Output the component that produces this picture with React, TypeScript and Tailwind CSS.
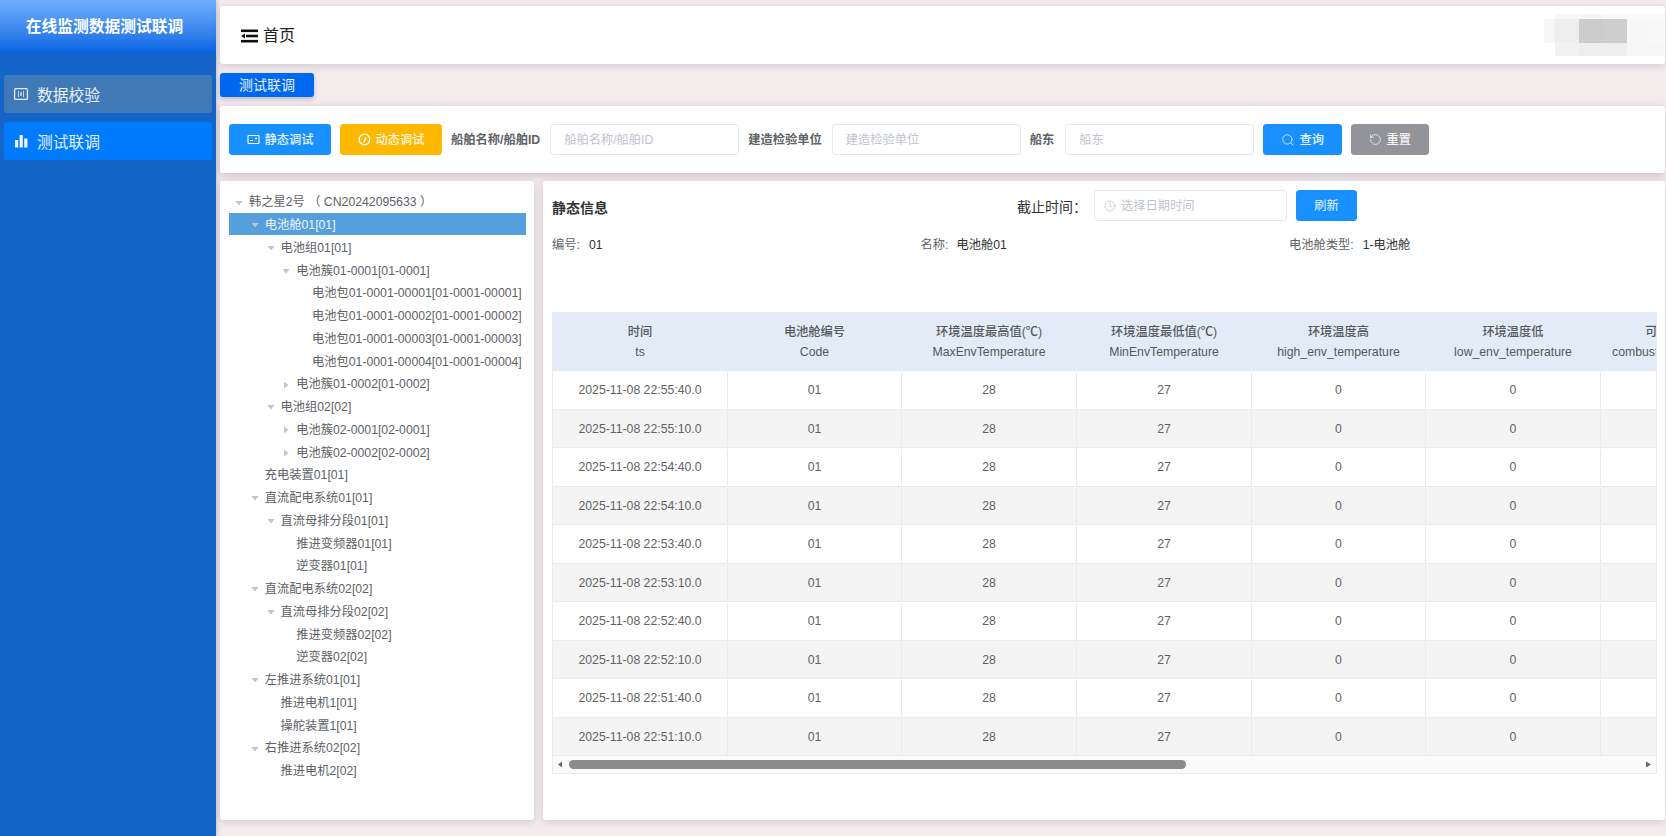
import { Clock, RotateCw, Search } from 'lucide-react';

const font = { fontFamily: '"Liberation Sans", "Noto Sans CJK SC", sans-serif' };

const treeRows: { label: string; level: number; caret?: 'down' | 'right'; selected?: boolean }[] = [
  { label: '韩之星2号 （ CN20242095633 ）', level: 0, caret: 'down' },
  { label: '电池舱01[01]', level: 1, caret: 'down', selected: true },
  { label: '电池组01[01]', level: 2, caret: 'down' },
  { label: '电池簇01-0001[01-0001]', level: 3, caret: 'down' },
  { label: '电池包01-0001-00001[01-0001-00001]', level: 4 },
  { label: '电池包01-0001-00002[01-0001-00002]', level: 4 },
  { label: '电池包01-0001-00003[01-0001-00003]', level: 4 },
  { label: '电池包01-0001-00004[01-0001-00004]', level: 4 },
  { label: '电池簇01-0002[01-0002]', level: 3, caret: 'right' },
  { label: '电池组02[02]', level: 2, caret: 'down' },
  { label: '电池簇02-0001[02-0001]', level: 3, caret: 'right' },
  { label: '电池簇02-0002[02-0002]', level: 3, caret: 'right' },
  { label: '充电装置01[01]', level: 1 },
  { label: '直流配电系统01[01]', level: 1, caret: 'down' },
  { label: '直流母排分段01[01]', level: 2, caret: 'down' },
  { label: '推进变频器01[01]', level: 3 },
  { label: '逆变器01[01]', level: 3 },
  { label: '直流配电系统02[02]', level: 1, caret: 'down' },
  { label: '直流母排分段02[02]', level: 2, caret: 'down' },
  { label: '推进变频器02[02]', level: 3 },
  { label: '逆变器02[02]', level: 3 },
  { label: '左推进系统01[01]', level: 1, caret: 'down' },
  { label: '推进电机1[01]', level: 2 },
  { label: '操舵装置1[01]', level: 2 },
  { label: '右推进系统02[02]', level: 1, caret: 'down' },
  { label: '推进电机2[02]', level: 2 },
];

const columns = [
  { zh: '时间', en: 'ts', width: 175 },
  { zh: '电池舱编号', en: 'Code', width: 174 },
  { zh: '环境温度最高值(℃)', en: 'MaxEnvTemperature', width: 175 },
  { zh: '环境温度最低值(℃)', en: 'MinEnvTemperature', width: 175 },
  { zh: '环境温度高', en: 'high_env_temperature', width: 174 },
  { zh: '环境温度低', en: 'low_env_temperature', width: 175 },
  { zh: '可燃气体报警值', en: 'combustible_gas_alarm_val', width: 175 },
];

const times = ['22:55:40.0', '22:55:10.0', '22:54:40.0', '22:54:10.0', '22:53:40.0', '22:53:10.0', '22:52:40.0', '22:52:10.0', '22:51:40.0', '22:51:10.0'];

function Caret({ dir }: { dir: 'down' | 'right' }) {
  return (
    <svg width="8" height="8" viewBox="0 0 8 8" className={dir === 'right' ? 'rotate-[-90deg]' : ''}>
      <path d="M0.5 2 L7.5 2 L4 6.5 Z" fill="#c0c4cc" />
    </svg>
  );
}

function ToolButton({ color, icon, label, width }: { color: string; icon: React.ReactNode; label: string; width: string }) {
  return (
    <button className={`flex h-[31px] ${width} ${color} shrink-0 items-center justify-center gap-[4px] rounded-[3.5px] text-[12.25px] font-medium text-white/90`}>
      {icon}
      <span className="pt-px">{label}</span>
    </button>
  );
}

function Field({ placeholder, width }: { placeholder: string; width: string }) {
  return (
    <div className={`flex h-[31px] ${width} shrink-0 items-center rounded-[3.5px] border border-[#e4e7ed] bg-white pl-[13px] pt-px text-[12.25px] text-[#c0c4cc]`}>
      {placeholder}
    </div>
  );
}

export default function App() {
  return (
    <div style={font} className="flex h-[836px] w-[1666px] overflow-hidden bg-[#f4ecec]">
      <aside className="flex w-[216px] shrink-0 flex-col bg-[#1565c9] shadow-[1px_0_4px_rgba(60,60,90,0.25)]">
        <div className="flex h-[53px] items-center justify-center bg-gradient-to-b from-[#70affd] to-[#0065e3] pr-[7px] text-[15.75px] font-bold text-white">
          在线监测数据测试联调
        </div>
        <nav className="flex flex-col gap-[9px] px-[4px] pt-[22px] text-[15.75px] text-white/90">
          <div className="flex h-[38px] items-center gap-[7px] rounded-[3px] bg-[#4079b8] pl-[8px]">
            <svg width="18" height="14" viewBox="0 0 18 14" fill="none" stroke="#e4ecf6" strokeWidth="1.3">
              <rect x="2.6" y="1.6" width="12.8" height="10.8" rx="1" />
              <path d="M6 5h1M6 7h1M6 9h1M11 5h1M11 7h1M11 9h1M9 5v4" />
            </svg>
            <span className="pt-[3px]">数据校验</span>
          </div>
          <div className="flex h-[38px] items-center gap-[7px] rounded-[3px] bg-[#007bfe] pl-[8px]">
            <svg width="18" height="14" viewBox="0 0 18 14" fill="#f0f6ff">
              <rect x="3" y="6" width="3.2" height="7.5" />
              <rect x="7.6" y="1" width="3.2" height="12.5" />
              <rect x="12.2" y="4.5" width="3.2" height="9" />
            </svg>
            <span className="pt-[3px]">测试联调</span>
          </div>
        </nav>
      </aside>

      <main className="flex min-w-0 flex-1 flex-col pl-[4px] pr-px pt-[6px]">
        <header className="flex h-[58px] shrink-0 items-center justify-between rounded-[3px] bg-white pl-[21px] shadow-[0_2px_8px_rgba(70,60,110,0.2)]">
          <div className="flex items-center gap-[5px] pt-[2px] text-[16px] text-[#222]">
            <svg width="17" height="14" viewBox="0 0 17 14" fill="#111">
              <rect x="0" y="0.5" width="17" height="2.6" />
              <rect x="5" y="5.7" width="12" height="2.6" />
              <rect x="0" y="10.9" width="17" height="2.6" />
              <path d="M0 7 L4 4.6 L4 9.4 Z" />
            </svg>
            首页
          </div>
          <svg width="120" height="42" viewBox="0 0 120 42" className="mr-px">
            <rect x="0" y="5" width="11" height="24" fill="#f6f6f6" />
            <rect x="11" y="0" width="24" height="5" fill="#f8f7f6" />
            <rect x="35" y="0" width="24" height="5" fill="#f7f6f5" />
            <rect x="59" y="0" width="24" height="5" fill="#fafafa" />
            <rect x="83" y="0" width="37" height="5" fill="#fbfafa" />
            <rect x="11" y="5" width="24" height="24" fill="#eeeeef" />
            <rect x="35" y="5" width="24" height="24" fill="#cbcccd" />
            <rect x="59" y="5" width="24" height="24" fill="#cecece" />
            <rect x="83" y="5" width="24" height="24" fill="#f7f7f7" />
            <rect x="107" y="5" width="13" height="24" fill="#f9f8f8" />
            <rect x="11" y="29" width="24" height="13" fill="#f2f1f3" />
            <rect x="35" y="29" width="48" height="13" fill="#efeeef" />
            <rect x="83" y="29" width="37" height="13" fill="#f6f5f7" />
          </svg>
        </header>

        <div className="mt-[9px] shrink-0">
          <span className="flex h-[24px] w-[94px] items-center justify-center rounded-[3px] bg-[#0068ee] text-[14px] text-white/90 shadow-[0_2px_4px_rgba(40,60,130,0.3)]">
            测试联调
          </span>
        </div>

        <section className="mt-[9px] flex h-[67px] shrink-0 items-center gap-[9px] rounded-[3px] bg-white pl-[9px] shadow-[0_2px_8px_rgba(70,60,110,0.25)]">
          <ToolButton
            color="bg-[#1890ff]"
            width="w-[102px]"
            label="静态调试"
            icon={
              <svg width="13" height="11" viewBox="0 0 13 11" fill="none" stroke="#fff" strokeWidth="1.1" className="mr-px">
                <rect x="1" y="1.5" width="11" height="8" rx="0.8" />
                <path d="M3 6.5h3" />
                <rect x="8" y="3.6" width="2" height="1.6" fill="#fff" stroke="none" />
              </svg>
            }
          />
          <ToolButton
            color="bg-[#ffb800]"
            width="w-[102px]"
            label="动态调试"
            icon={
              <svg width="13" height="13" viewBox="0 0 13 13" fill="none" stroke="#fff" strokeWidth="1.3" className="mr-px">
                <circle cx="6.5" cy="6.5" r="5.3" />
                <path d="M5.8 9.5 L8 4.5" strokeWidth="1.6" />
              </svg>
            }
          />
          <label className="shrink-0 pr-px pt-px text-[12.25px] font-bold text-[#606266]">船舶名称/船舶ID</label>
          <Field placeholder="船舶名称/船舶ID" width="w-[189px]" />
          <label className="shrink-0 pr-px pt-px text-[12.25px] font-bold text-[#606266]">建造检验单位</label>
          <Field placeholder="建造检验单位" width="w-[189px]" />
          <label className="shrink-0 pr-[2px] pt-px text-[12.25px] font-bold text-[#606266]">船东</label>
          <Field placeholder="船东" width="w-[189px]" />
          <ToolButton color="bg-[#1890ff]" width="w-[79px]" label="查询" icon={<Search size={14} strokeWidth={1.4} />} />
          <ToolButton color="bg-[#939499]" width="w-[78px]" label="重置" icon={<RotateCw size={13} strokeWidth={1.4} className="-scale-x-100" />} />
        </section>

        <div className="mt-[8px] flex h-[639px] shrink-0 gap-[9px]">
          <section className="w-[314px] shrink-0 rounded-[3px] bg-white pl-[9px] pr-[8px] pt-[8.75px] shadow-[0_2px_8px_rgba(70,60,110,0.2)]">
            {treeRows.map((row) => (
              <div
                key={row.label}
                style={{ paddingLeft: row.level * 15.75 }}
                className={`flex h-[22.75px] items-center whitespace-nowrap pt-[3px] text-[12.25px] ${row.selected ? 'bg-[#559fdc] text-white/90' : 'text-[#606266]'}`}
              >
                <span className="flex w-[20px] shrink-0 items-center justify-center">{row.caret && <Caret dir={row.caret} />}</span>
                {row.label}
              </div>
            ))}
          </section>

          <section className="flex min-w-0 flex-1 flex-col rounded-[3px] bg-white pl-[9px] pr-[8px] pt-[9px] shadow-[0_2px_8px_rgba(70,60,110,0.2)]">
            <div className="flex h-[31px] items-center">
              <h2 className="w-[465px] shrink-0 pt-[5px] text-[14px] font-bold text-[#303133]">静态信息</h2>
              <span className="w-[77px] shrink-0 pt-[3px] text-[14px] text-[#303133]">截止时间：</span>
              <div className="flex h-[31px] w-[193px] items-center gap-[5px] rounded-[3.5px] border border-[#e4e7ed] pl-[9px] text-[12.25px] text-[#c0c4cc]">
                <Clock size={12} strokeWidth={1.5} />
                <span className="pt-px">选择日期时间</span>
              </div>
              <button className="ml-[9px] h-[31px] w-[61px] rounded-[3.5px] bg-[#1890ff] pt-px text-[12.25px] text-white/90">刷新</button>
            </div>

            <div className="mt-[14px] grid grid-cols-[368.5px_368.5px_1fr] pt-px text-[12.25px]">
              <div><span className="text-[#606266]">编号:</span><span className="ml-[9px] text-[#303133]">01</span></div>
              <div><span className="text-[#606266]">名称:</span><span className="ml-[8px] text-[#303133]">电池舱01</span></div>
              <div><span className="text-[#606266]">电池舱类型:</span><span className="ml-[9px] text-[#303133]">1-电池舱</span></div>
            </div>

            <div className="mt-[58px] border border-[#e8ebf2]">
              <div className="overflow-hidden">
                <div className="flex h-[58px] w-max bg-[#e3ecf6] text-[12.25px] font-medium text-[#55585e]">
                  {columns.map((col) => (
                    <div
                      key={col.en}
                      style={{ width: col.width }}
                      className="flex shrink-0 flex-col items-center justify-center gap-[5px] whitespace-nowrap border-r border-[#e8ebf2]"
                    >
                      <span className="leading-[15px]">{col.zh}</span>
                      <span className="leading-[15px]">{col.en}</span>
                    </div>
                  ))}
                </div>
                {times.map((time, rowIndex) => (
                  <div key={time} className={`flex h-[38.5px] w-max border-b border-[#e8ebf2] pt-px text-[12.25px] text-[#606266] ${rowIndex % 2 ? 'bg-[#f4f4f5]' : 'bg-white'}`}>
                    {columns.map((col, colIndex) => (
                      <div key={col.en} style={{ width: col.width }} className="flex shrink-0 items-center justify-center border-r border-[#e8ebf2]">
                        {colIndex === 0 ? `2025-11-08 ${time}` : colIndex === 1 ? '01' : colIndex === 2 ? '28' : colIndex === 3 ? '27' : '0'}
                      </div>
                    ))}
                  </div>
                ))}
              </div>
              <div className="flex h-[17px] items-center bg-[#fafafa]">
                <svg width="16" height="17" viewBox="0 0 16 17" className="shrink-0">
                  <path d="M9 5.5 L9 11.5 L5 8.5 Z" fill="#666" />
                </svg>
                <div className="h-[9px] w-[617px] shrink-0 rounded-full bg-[#8b8b8b]" />
                <div className="flex-1" />
                <svg width="16" height="17" viewBox="0 0 16 17" className="shrink-0">
                  <path d="M6 5.5 L6 11.5 L11 8.5 Z" fill="#666" />
                </svg>
              </div>
            </div>
          </section>
        </div>
      </main>
    </div>
  );
}
